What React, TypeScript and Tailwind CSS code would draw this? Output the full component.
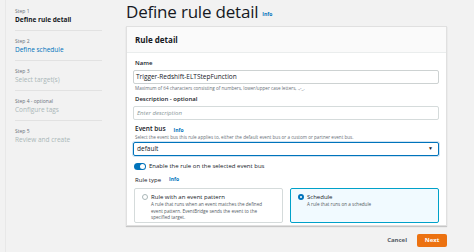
import React from 'react'

const steps = [
  { step: 'Step 1', title: 'Define rule detail', state: 'current' },
  { step: 'Step 2', title: 'Define schedule', state: 'link' },
  { step: 'Step 3', title: 'Select target(s)', state: 'disabled' },
  { step: 'Step 4 - optional', title: 'Configure tags', state: 'disabled' },
  { step: 'Step 5', title: 'Review and create', state: 'disabled' },
]

const Info = () => <span className="text-[5px] font-bold text-[#0073bb] ml-[8px]">Info</span>

const App = () => {
  return (
    <div
      className="w-[474px] h-[252px] bg-[#f2f2f2] flex overflow-hidden text-[#16191f]"
      style={{ fontFamily: '"Open Sans", "Liberation Sans", sans-serif' }}
    >
      {/* side nav */}
      <div className="w-[104px] h-full ml-[5px] border-l border-[#e8e8e8] pl-[9px] pr-[7px] pt-[1px] shrink-0">
        {steps.map((s, i) => (
          <div key={s.step} className={`h-[30px] flex flex-col justify-center ${i < steps.length - 1 ? 'border-b border-[#e2e2e2]' : ''}`}>
            <div className="text-[5px] leading-[8px] text-[#687078]">{s.step}</div>
            <div
              className={
                s.state === 'current'
                  ? 'text-[6.5px] leading-[10px] font-bold text-[#16191f]'
                  : s.state === 'link'
                  ? 'text-[6.5px] leading-[10px] text-[#0073bb]'
                  : 'text-[6.5px] leading-[10px] text-[#aab7b8]'
              }
            >
              {s.title}
            </div>
          </div>
        ))}
      </div>

      {/* main */}
      <div className="flex flex-col pl-[17px] w-[339px]">
        <div className="h-[26px] flex items-center pb-[2px]">
          <span className="text-[17px] leading-[20px] text-[#16191f] tracking-[-0.2px]">Define rule detail</span>
          <span className="text-[5px] font-bold text-[#0073bb] ml-[4px] mt-[5px]">Info</span>
        </div>

        <div className="w-[321px] h-[200px] bg-white border border-[#e0e0e0] shadow-[0_1px_1px_rgba(0,0,0,0.18)] flex flex-col">
          <div className="h-[26px] bg-[#fafafa] border-b border-[#eaeded] flex items-center px-[8px]">
            <span className="text-[8px] font-bold">Rule detail</span>
          </div>

          <div className="pl-[6px] pr-[7px] flex flex-col">
            <div className="h-[15px] mt-[2px] flex items-end pb-[2px] pl-[2px] text-[6px] font-semibold">Name</div>
            <div className="h-[14px] border border-[#cdd2d2] rounded-[2px] flex items-center pl-[2px] text-[6.5px]">
              Trigger-Redshift-ELTStepFunction
            </div>
            <div className="h-[9px] flex items-center pl-[2px] text-[4.6px] text-[#687078]">
              Maximum of 64 characters consisting of numbers, lower/upper case letters, .,-_.
            </div>
            <div className="h-[13px] flex items-center pl-[2px] text-[6px] font-semibold">Description - optional</div>
            <div className="h-[14px] border border-[#d5dbdb] rounded-[2px] flex items-center pl-[3px] text-[6px] italic text-[#879596]">
              Enter description
            </div>
            <div className="h-[12px] mt-[2px] flex items-end pl-[2px] text-[6.5px] font-semibold">
              Event bus <Info />
            </div>
            <div className="h-[7px] flex items-center pl-[2px] text-[4.6px] text-[#687078]">
              Select the event bus this rule applies to, either the default event bus or a custom or partner event bus.
            </div>
            <div className="h-[14px] mt-[1px] border border-[#0073bb] rounded-[2px] flex items-center justify-between pl-[3px] pr-[5px] text-[6.5px] shadow-[0_0_0_1px_#cfe3f2]">
              <span>default</span>
              <span className="text-[5px]">▼</span>
            </div>
            <div className="h-[20px] flex items-center pl-[1px] gap-[3px]">
              <div className="w-[12px] h-[7px] rounded-full bg-[#0073bb] flex items-center justify-end pr-[1px]">
                <div className="w-[5px] h-[5px] rounded-full bg-white" />
              </div>
              <span className="text-[6px]">Enable the rule on the selected event bus</span>
            </div>
            <div className="h-[8px] flex items-center pl-[2px] text-[6px]">
              Rule type <Info />
            </div>
            <div className="flex gap-[7px] mt-[4px] pl-[1px]">
              <div className="w-[149px] h-[35px] border border-[#d5dbdb] rounded-[2px] flex pl-[7px] pt-[4px] gap-[3px]">
                <div className="w-[6px] h-[6px] rounded-full border border-[#aab7b8] mt-[1px] shrink-0" />
                <div className="flex flex-col">
                  <span className="text-[6px] leading-[8px]">Rule with an event pattern</span>
                  <span className="text-[4.6px] leading-[6.5px] text-[#545b64] w-[120px]">
                    A rule that runs when an event matches the defined event pattern. EventBridge sends the event to the specified target.
                  </span>
                </div>
              </div>
              <div className="w-[149px] h-[35px] border border-[#00a1c9] bg-[#f1faff] rounded-[2px] flex pl-[7px] pt-[4px] gap-[3px]">
                <div className="w-[6px] h-[6px] rounded-full border-[2px] border-[#0073bb] mt-[1px] shrink-0 bg-white" />
                <div className="flex flex-col">
                  <span className="text-[6px] leading-[8px]">Schedule</span>
                  <span className="text-[4.6px] leading-[6.5px] text-[#545b64]">A rule that runs on a schedule</span>
                </div>
              </div>
            </div>
          </div>
        </div>

        <div className="w-[321px] flex justify-end items-center mt-[8px] gap-[10px]">
          <span className="text-[6px] font-bold text-[#545b64]">Cancel</span>
          <div className="w-[30px] h-[13px] bg-[#ec7211] rounded-[2px] flex items-center justify-center text-[6px] font-bold text-white">
            Next
          </div>
        </div>
      </div>
    </div>
  )
}

export default App
